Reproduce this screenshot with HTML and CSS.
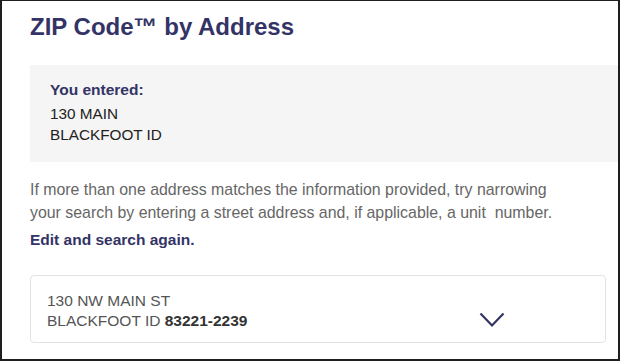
FILE: index.html
```html
<!DOCTYPE html>
<html lang="en">
<head>
    <meta charset="UTF-8">
    <meta name="viewport" content="width=device-width, initial-scale=1.0">
    <title>ZIP Code by Address</title>
    <link rel="stylesheet" href="styles.css">
</head>
<body>
    <div class="frame">
        <h1 class="page-title">ZIP Code&trade; by Address</h1>

        <div class="entered-box">
            <div class="entered-label">You entered:</div>
            <div class="entered-line">130 MAIN</div>
            <div class="entered-line">BLACKFOOT ID</div>
        </div>

        <p class="hint">If more than one address matches the information provided, try narrowing your search by entering a street address and, if applicable, a unit&nbsp; number.</p>
        <a class="edit-link" href="#">Edit and search again.</a>

        <div class="result-card">
            <div class="result-text">
                <div>130 NW MAIN ST</div>
                <div>BLACKFOOT ID <strong>83221-2239</strong></div>
            </div>
            <svg class="chevron" width="26" height="16" viewBox="0 0 26 16">
                <polyline points="1.5,1.5 13,13.5 24.5,1.5" fill="none" stroke="#333366" stroke-width="2.2"/>
            </svg>
        </div>
    </div>
</body>
</html>
```

FILE: styles.css
```css
body {
    margin: 0;
    font-family: "Liberation Sans", Arial, sans-serif;
    background-color: #fff;
}

.frame {
    box-sizing: border-box;
    width: 620px;
    height: 361px;
    border: 2px solid #1e1e1e;
    border-top-width: 1px;
    padding-left: 28px;
    overflow: hidden;
}

.page-title {
    margin: 12px 0 0;
    font-size: 24px;
    line-height: 28px;
    color: #333366;
}

.entered-box {
    margin-top: 24px;
    height: 97px;
    box-sizing: border-box;
    padding: 14px 20px 0;
    background-color: #f5f5f5;
}

.entered-label {
    margin-bottom: 3px;
    font-size: 15.5px;
    font-weight: bold;
    line-height: 21px;
    color: #333366;
}

.entered-line {
    font-size: 15.3px;
    line-height: 21px;
    color: #222;
}

.hint {
    width: 540px;
    margin: 16px 0 0;
    font-size: 15.9px;
    line-height: 23px;
    color: #666;
}

.edit-link {
    display: block;
    margin-top: 6px;
    font-size: 15.5px;
    font-weight: bold;
    line-height: 20px;
    color: #333366;
    text-decoration: none;
}

.result-card {
    display: flex;
    align-items: flex-end;
    height: 68px;
    box-sizing: border-box;
    margin: 25px 12px 0 0;
    padding: 0 100px 11px 16px;
    border: 1px solid #e3e3e3;
    border-radius: 4px;
}

.result-text {
    flex: 1;
    font-size: 15.5px;
    line-height: 20px;
    color: #555;
}

.result-text strong {
    color: #333;
}

.chevron {
    margin-bottom: 3px;
}
```
